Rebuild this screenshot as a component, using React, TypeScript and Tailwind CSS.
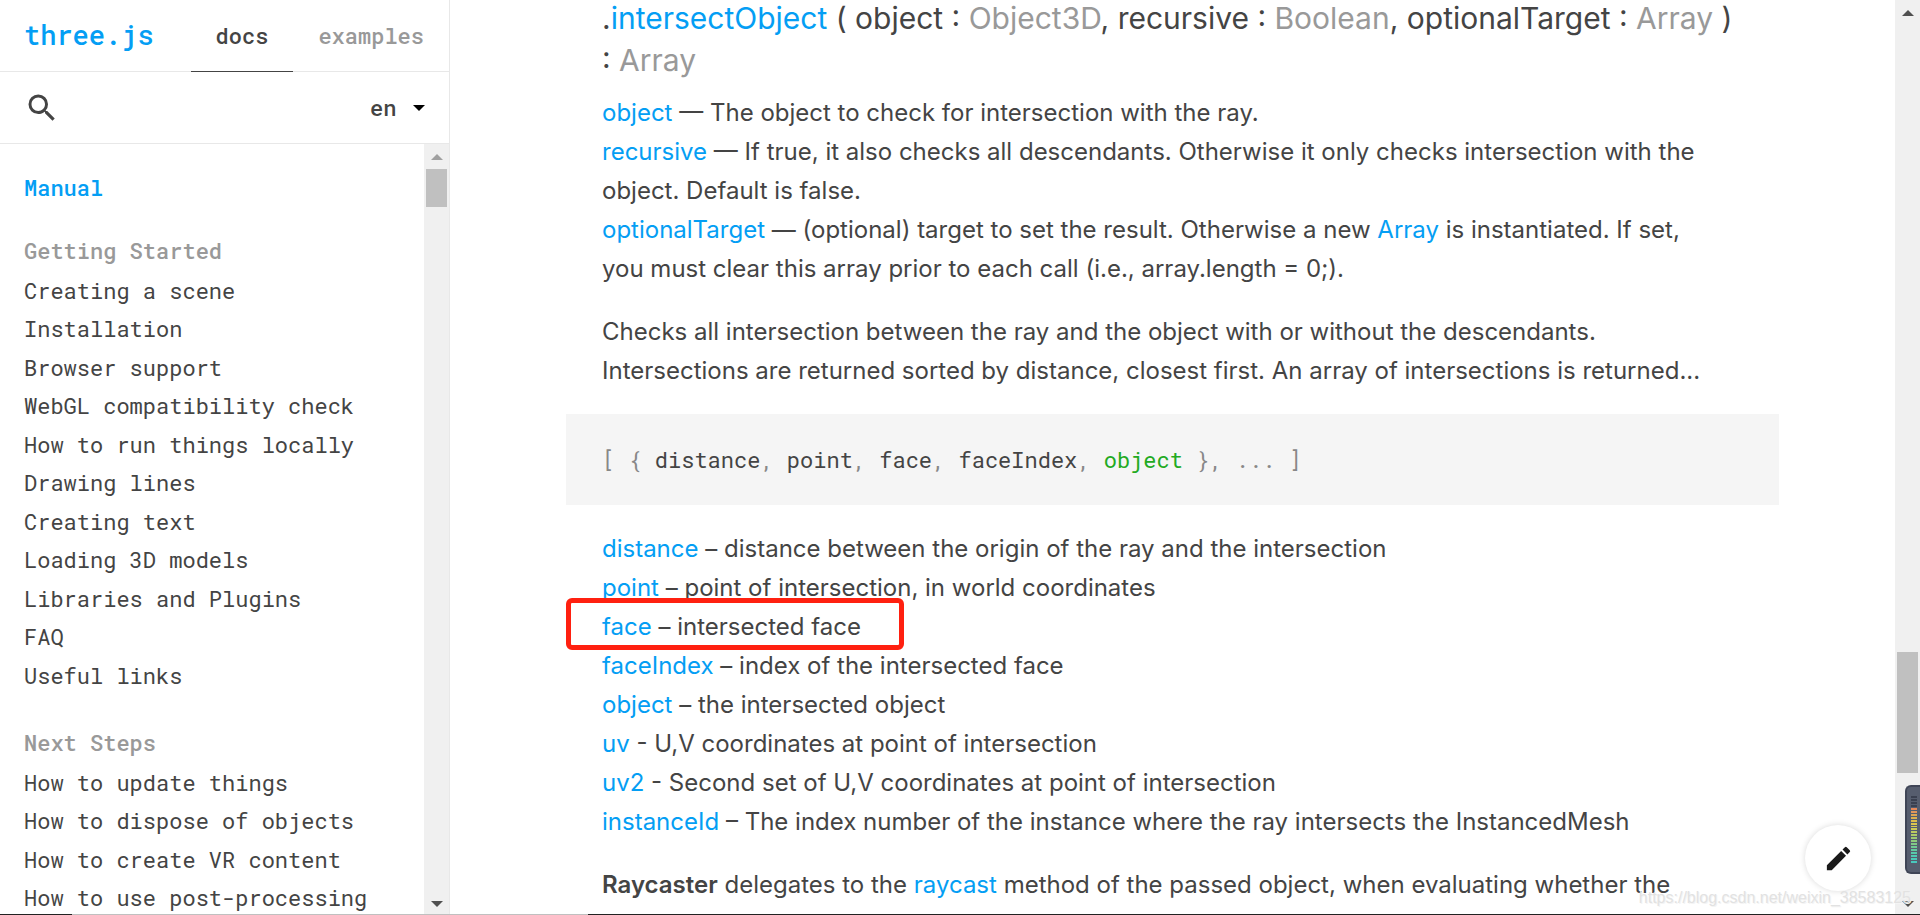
import type { ReactNode } from "react";

const SECTIONS = [
  {
    title: "Getting Started",
    pages: [
      "Creating a scene",
      "Installation",
      "Browser support",
      "WebGL compatibility check",
      "How to run things locally",
      "Drawing lines",
      "Creating text",
      "Loading 3D models",
      "Libraries and Plugins",
      "FAQ",
      "Useful links",
    ],
  },
  {
    title: "Next Steps",
    pages: [
      "How to update things",
      "How to dispose of objects",
      "How to create VR content",
      "How to use post-processing",
    ],
  },
];

const FIELDS = [
  { name: "distance", text: "– distance between the origin of the ray and the intersection" },
  { name: "point", text: "– point of intersection, in world coordinates" },
  { name: "face", text: "– intersected face", marked: true },
  { name: "faceIndex", text: "– index of the intersected face" },
  { name: "object", text: "– the intersected object" },
  { name: "uv", text: "- U,V coordinates at point of intersection" },
  { name: "uv2", text: "- Second set of U,V coordinates at point of intersection" },
  { name: "instanceId", text: "– The index number of the instance where the ray intersects the InstancedMesh" },
];

const METER = [
  ...Array(4).fill("bg-[#3a4050]"),
  "bg-[#e8895a]",
  "bg-[#e2965a]",
  "bg-[#dfa552]",
  "bg-[#dcb14e]",
  "bg-[#dcbc4c]",
  "bg-[#dcc64c]",
  "bg-[#d9cc4f]",
  "bg-[#cbcb57]",
  "bg-[#bdca5f]",
  "bg-[#aecb68]",
  "bg-[#9ecb72]",
  "bg-[#8fca7c]",
  "bg-[#80c987]",
  "bg-[#70c993]",
  "bg-[#63c99f]",
  "bg-[#58c9aa]",
  "bg-[#50c9b2]",
  "bg-[#4cc9b8]",
  "bg-[#48c8bd]",
];

function Link({ children }: { children: ReactNode }) {
  return (
    <a href="#" className="text-[#049ef4]">
      {children}
    </a>
  );
}

function Type({ children }: { children: ReactNode }) {
  return (
    <a href="#" className="text-[#999999]">
      {children}
    </a>
  );
}

function Arrow({ up, className }: { up?: boolean; className: string }) {
  return (
    <svg viewBox="0 0 12 6" className={`h-[6px] w-[12px] ${className}`}>
      <path d={up ? "M0 6 6 0l6 6z" : "M0 0h12L6 6z"} fill="currentColor" />
    </svg>
  );
}

function Sidebar() {
  return (
    <aside className="flex w-[450px] shrink-0 flex-col border-r border-[#e8e8e8] font-['Roboto_Mono','Liberation_Mono',monospace] text-[22px]">
      <header className="flex h-[72px] shrink-0 items-stretch justify-between border-b border-[#e8e8e8] pl-6">
        <h1 className="flex items-center text-[27px] font-medium">
          <Link>three.js</Link>
        </h1>
        <nav className="-mb-px flex items-stretch font-medium">
          <a href="#" className="flex items-center border-b border-[#444444] px-[25px]">
            docs
          </a>
          <a href="#" className="flex items-center border-b border-transparent px-[25px] text-[#999999]">
            examples
          </a>
        </nav>
      </header>

      <div className="flex h-[72px] shrink-0 items-center justify-between border-b border-[#e8e8e8] pr-6 pl-6">
        <button aria-label="Search">
          <svg viewBox="0 0 24 24" className="size-9" fill="#444444">
            <path d="M15.5 14h-.79l-.28-.27A6.471 6.471 0 0 0 16 9.5 6.5 6.5 0 1 0 9.5 16c1.61 0 3.09-.59 4.23-1.57l.27.28v.79l5 4.99L20.49 19l-4.99-5zm-6 0C7.01 14 5 11.99 5 9.5S7.01 5 9.5 5 14 7.01 14 9.5 11.99 14 9.5 14z" />
          </svg>
        </button>
        <div className="relative flex items-center">
          <select aria-label="Language" className="appearance-none bg-transparent pr-7 font-medium">
            <option>en</option>
          </select>
          <Arrow className="pointer-events-none absolute right-0 text-black" />
        </div>
      </div>

      <div className="flex min-h-0 flex-1">
        <div className="min-w-0 flex-1 overflow-hidden pt-[25px] pl-6 whitespace-nowrap">
          <h2 className="leading-[38px] font-medium">
            <Link>Manual</Link>
          </h2>
          {SECTIONS.map((section) => (
            <section key={section.title} className="mt-[25px] pb-1">
              <h3 className="pb-[2px] leading-[38px] font-medium text-[#999999]">{section.title}</h3>
              <ul>
                {section.pages.map((page) => (
                  <li key={page} className="leading-[38px] even:pb-px">
                    <a href="#">{page}</a>
                  </li>
                ))}
              </ul>
            </section>
          ))}
        </div>
        <div className="flex w-[25px] shrink-0 flex-col items-center bg-[#f0f0f0] pt-[10px] pb-2">
          <Arrow up className="text-[#a0a0a0]" />
          <div className="mt-[9px] mb-auto h-[38px] w-[21px] bg-[#c0c0c0]" />
          <Arrow className="text-[#505050]" />
        </div>
      </div>
    </aside>
  );
}

function Content() {
  return (
    <main className="min-w-0 flex-1 overflow-hidden px-[116px] font-[Inter,sans-serif] text-2xl leading-[39px]">
      <h3 className="-mt-[3px] px-9 text-[30px] leading-[42px]">
        .<Link>intersectObject</Link> ( object : <Type>Object3D</Type>, recursive : <Type>Boolean</Type>,
        optionalTarget : <Type>Array</Type> ) : <Type>Array</Type>
      </h3>

      <p className="mt-3 px-9">
        <Link>object</Link> — The object to check for intersection with the ray.
        <br />
        <Link>recursive</Link> — If true, it also checks all descendants. Otherwise it only checks
        intersection with the object. Default is false.
        <br />
        <Link>optionalTarget</Link> — (optional) target to set the result. Otherwise a new{" "}
        <Link>Array</Link> is instantiated. If set,
        <br />
        you must clear this array prior to each call (i.e., array.length = 0;).
      </p>

      <p className="mt-6 px-9">
        Checks all intersection between the ray and the object with or without the descendants.
        Intersections are returned sorted by distance, closest first. An array of intersections is
        returned...
      </p>

      <pre className="my-6 bg-[#f5f5f5] px-9 py-[26px] font-['Roboto_Mono','Liberation_Mono',monospace] text-[22px] leading-[39px] text-[#888888]">
        <code className="font-[inherit]">
          {"[ { "}
          <b className="font-normal text-[#444444]">distance</b>
          {", "}
          <b className="font-normal text-[#444444]">point</b>
          {", "}
          <b className="font-normal text-[#444444]">face</b>
          {", "}
          <b className="font-normal text-[#444444]">faceIndex</b>
          {", "}
          <b className="font-normal text-[#22aa22]">object</b>
          {" }, ... ]"}
        </code>
      </pre>

      <ul className="px-9">
        {FIELDS.map((field) => (
          <li key={field.name} className="relative">
            <Link>{field.name}</Link> {field.text}
            {field.marked && (
              <span className="absolute -top-[9px] -left-9 h-[52px] w-[338px] rounded-md border-5 border-[#ff2010]" />
            )}
          </li>
        ))}
      </ul>

      <p className="mt-6 px-9 whitespace-nowrap">
        <strong className="font-semibold">Raycaster</strong> delegates to the <Link>raycast</Link>{" "}
        method of the passed object, when evaluating whether the
      </p>
    </main>
  );
}

export default function App() {
  return (
    <div className="relative flex h-screen overflow-hidden bg-white text-[#444444]">
      <Sidebar />
      <Content />

      {/* Page scrollbar */}
      <div className="flex w-[25px] shrink-0 flex-col items-center bg-[#f0f0f0] pt-[10px] pb-2">
        <Arrow up className="text-[#505050]" />
        <div className="flex w-full flex-1 flex-col items-center justify-end pb-32">
          <div className="h-[121px] w-[21px] bg-[#c0c0c0]" />
        </div>
        <Arrow className="text-[#505050]" />
      </div>

      <button
        aria-label="Edit"
        className="absolute right-[49px] bottom-6 flex size-[66px] items-center justify-center rounded-full bg-white shadow-[0_0_6px_rgba(0,0,0,0.15)]"
      >
        <svg viewBox="0 0 24 24" className="size-[31px]" fill="#1a1a1a">
          <path d="M3 17.25V21h3.75L17.81 9.94l-3.75-3.75L3 17.25zM20.71 7.04a1 1 0 0 0 0-1.41l-2.34-2.34a1 1 0 0 0-1.41 0l-1.83 1.83 3.75 3.75 1.83-1.83z" />
        </svg>
      </button>

      {/* Level meter docked at the window edge */}
      <div className="absolute right-0 bottom-[41px] flex h-[89px] w-[15px] flex-col gap-px rounded-l-md border-2 border-r-0 border-[#3f4556] bg-[#565d6e] py-[9px] pl-1">
        {METER.map((color, i) => (
          <div key={i} className={`h-[2px] w-[6px] ${color}`} />
        ))}
      </div>

      <span className="absolute right-[9px] bottom-[5px] font-['Liberation_Sans',sans-serif] text-base text-[#e2e2e2] [text-shadow:1px_1px_0_#f4f4f4]">
        https://blog.csdn.net/weixin_38583125
      </span>

      <div className="absolute inset-x-0 bottom-0 flex h-px">
        <div className="w-[72px] bg-[#222222]" />
        <div className="w-[516px] bg-[#c0c0c0]" />
        <div className="flex-1 bg-[#222222]" />
      </div>
    </div>
  );
}
